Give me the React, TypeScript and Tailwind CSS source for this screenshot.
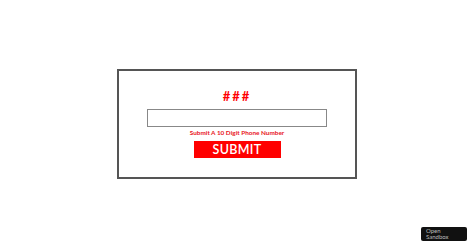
import React from "react";

export default function App() {
  return (
    <div
      className="relative w-full h-[248px] bg-white flex items-center justify-center"
      style={{ fontFamily: "Lato, 'Open Sans', sans-serif" }}
    >
      <div className="w-[240px] h-[110px] border-2 border-[#555555] flex flex-col items-center pt-[18px]">
        <div className="text-[13px] leading-[14px] font-bold text-[#ff0000] tracking-[2px]">###</div>
        <div className="mt-[6px] w-[180px] h-[18px] border border-[#888888] bg-white" />
        <div className="mt-[2px] text-[6.4px] leading-[8px] font-bold text-[#e8141c]">
          Submit A 10 Digit Phone Number
        </div>
        <button className="mt-[4px] w-[87px] h-[17px] bg-[#ff0000] text-white text-[12.5px] leading-[17px] font-semibold tracking-[0.3px]">
          SUBMIT
        </button>
      </div>
      <div className="absolute left-[421px] top-[227px] w-[46px] h-[14px] bg-[#111111] rounded-[2px] px-[5px] pt-[1px] text-[6px] leading-[6px] text-[#bbbbbb]">
        <div>Open</div>
        <div>Sandbox</div>
      </div>
    </div>
  );
}
